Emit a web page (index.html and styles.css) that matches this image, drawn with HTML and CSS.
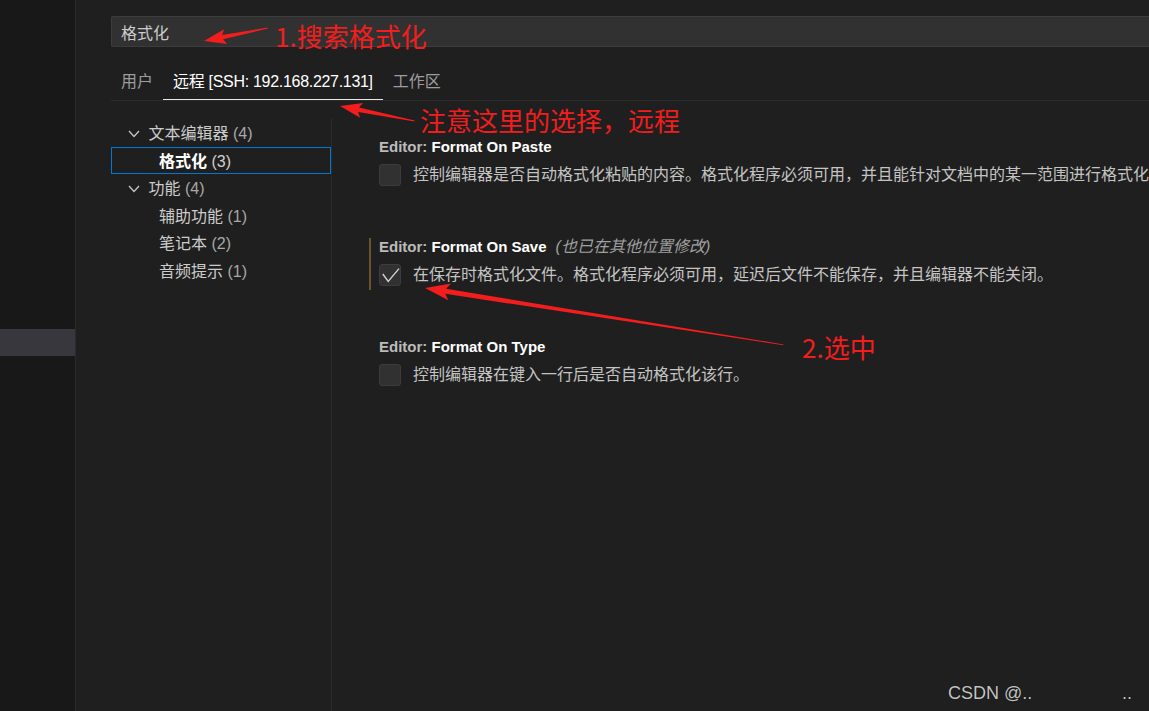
FILE: index.html
```html
<!DOCTYPE html>
<html lang="zh-CN">
<head>
    <meta charset="UTF-8">
    <meta name="viewport" content="width=device-width, initial-scale=1.0">
    <title>设置</title>
    <link rel="stylesheet" href="styles.css">
</head>
<body>
    <div class="app">
        <div class="activity">
            <div class="activity-sel"></div>
        </div>
        <div class="main">
            <div class="search">格式化</div>
            <div class="tabs">
                <div class="tab">用户</div>
                <div class="tab active">远程 [SSH: 192.168.227.131]</div>
                <div class="tab">工作区</div>
            </div>
            <div class="body">
                <div class="tree">
                    <div class="row group">
                        <svg class="chev" width="12" height="8" viewBox="0 0 12 8"><polyline points="1,1 6,6.5 11,1" fill="none" stroke="#c5c5c5" stroke-width="1.3"/></svg>
                        文本编辑器 <span class="count">(4)</span>
                    </div>
                    <div class="row child selected"><b>格式化</b> <span class="count">(3)</span></div>
                    <div class="row group">
                        <svg class="chev" width="12" height="8" viewBox="0 0 12 8"><polyline points="1,1 6,6.5 11,1" fill="none" stroke="#c5c5c5" stroke-width="1.3"/></svg>
                        功能 <span class="count">(4)</span>
                    </div>
                    <div class="row child">辅助功能 <span class="count">(1)</span></div>
                    <div class="row child">笔记本 <span class="count">(2)</span></div>
                    <div class="row child">音频提示 <span class="count">(1)</span></div>
                </div>
                <div class="settings">
                    <div class="setting">
                        <div class="title"><span class="cat">Editor: </span>Format On Paste</div>
                        <div class="value">
                            <span class="box"></span>
                            <span class="desc">控制编辑器是否自动格式化粘贴的内容。格式化程序必须可用，并且能针对文档中的某一范围进行格式化。</span>
                        </div>
                    </div>
                    <div class="setting modified">
                        <div class="title"><span class="cat">Editor: </span>Format On Save<span class="note">(也已在其他位置修改)</span></div>
                        <div class="value">
                            <span class="box">
                                <svg width="22" height="22" viewBox="0 0 22 22"><polyline points="3.8,10 9.2,17.4 20,4.6" fill="none" stroke="#d4d4d4" stroke-width="1.4"/></svg>
                            </span>
                            <span class="desc">在保存时格式化文件。格式化程序必须可用，延迟后文件不能保存，并且编辑器不能关闭。</span>
                        </div>
                    </div>
                    <div class="setting">
                        <div class="title"><span class="cat">Editor: </span>Format On Type</div>
                        <div class="value">
                            <span class="box"></span>
                            <span class="desc">控制编辑器在键入一行后是否自动格式化该行。</span>
                        </div>
                    </div>
                </div>
            </div>
        </div>

        <!-- 标注 -->
        <svg class="marks" width="1149" height="711" viewBox="0 0 1149 711">
            <g fill="#f21d1d">
                <g transform="translate(204 41) rotate(-11.5)">
                    <polygon points="0,0 22,-7.5 19,-2.2 65,-0.5 65,0.5 19,2.2 22,7.5"/>
                </g>
                <g transform="translate(340 106) rotate(11.3)">
                    <polygon points="0,0 22,-7.5 19,-2.2 76,-0.5 76,0.5 19,2.2 22,7.5"/>
                </g>
                <g transform="translate(425 288) rotate(9)">
                    <polygon points="0,0 25,-8.5 21,-2.6 363,-0.4 363,0.4 21,2.6 25,8.5"/>
                </g>
            </g>
        </svg>
        <div class="mark mark-1">1.搜索格式化</div>
        <div class="mark mark-2">注意这里的选择，远程</div>
        <div class="mark mark-3">2.选中</div>

        <div class="wm">CSDN @..</div>
        <div class="wm wm-2">..</div>
    </div>
</body>
</html>
```

FILE: styles.css
```css
* {
    box-sizing: border-box;
}
body {
    margin: 0;
    padding: 0;
    background-color: #1f1f1f;
    font-family: "Liberation Sans", "Noto Sans CJK SC", sans-serif;
    font-size: 16px;
    color: #cccccc;
}
.app {
    position: relative;
    width: 1149px;
    height: 711px;
    display: flex;
    overflow: hidden;
}
.activity {
    width: 76px;
    flex-shrink: 0;
    background-color: #181818;
    border-right: 1px solid #2b2b2b;
    padding-top: 329px;
}
.activity-sel {
    height: 27px;
    background-color: #37373d;
}
.main {
    flex: 1;
    min-width: 0;
    padding: 16px 0 0 35px;
    display: flex;
    flex-direction: column;
}
.search {
    height: 31px;
    line-height: 33px;
    padding-left: 9px;
    background-color: #313131;
    border: 1px solid #3c3c3c;
    border-right: none;
    border-radius: 2px 0 0 2px;
    color: #cccccc;
}
.tabs {
    display: flex;
    border-bottom: 1px solid #2b2b2b;
}
.tab {
    padding: 24px 10px 6px;
    line-height: 22px;
    color: #9d9d9d;
    border-bottom: 1px solid transparent;
    white-space: nowrap;
}
.tab.active {
    color: #ffffff;
    letter-spacing: -0.3px;
    border-bottom-color: #e7e7e7;
}
.body {
    flex: 1;
    display: flex;
    margin-top: 17px;
}
.tree {
    width: 221px;
    flex-shrink: 0;
    border-right: 1px solid #2b2b2b;
    padding-top: 1px;
}
.row {
    height: 27.5px;
    line-height: 27.5px;
    white-space: nowrap;
    border: 1px solid transparent;
    color: #cccccc;
}
.row.group {
    padding-left: 16px;
}
.row.child {
    padding-left: 47px;
}
.chev {
    margin-right: 4px;
    vertical-align: 1px;
}
.count {
    color: #a8a8a8;
}
.row.selected {
    border-color: #0078d4;
    color: #ffffff;
}
.row.selected b {
    font-weight: 700;
}
.row.selected .count {
    color: #d0d0d0;
}
.settings {
    flex: 1;
    min-width: 0;
    padding: 20px 0 0 37px;
}
.setting {
    height: 52px;
    margin-bottom: 48px;
    padding-left: 8px;
    border-left: 2px solid transparent;
    white-space: nowrap;
}
.setting.modified {
    border-left-color: #6b5428;
}
.title {
    height: 18px;
    line-height: 17px;
    font-size: 15px;
    font-weight: 700;
    color: #ffffff;
}
.cat {
    color: #bbbbbb;
}
.note {
    margin-left: 9px;
    font-size: 16px;
    font-weight: 400;
    font-style: italic;
    color: #a0a0a0;
}
.value {
    margin-top: 8px;
    display: flex;
    align-items: center;
}
.box {
    width: 22px;
    height: 22px;
    flex-shrink: 0;
    background-color: #313131;
    border: 1px solid #3c3c3c;
    border-radius: 3px;
    display: flex;
}
.box svg {
    margin: -1px;
}
.desc {
    margin-left: 12px;
    line-height: 22px;
    color: #c4c4c4;
}
.marks {
    position: absolute;
    left: 0;
    top: 0;
    pointer-events: none;
}
.mark {
    position: absolute;
    font-family: "Noto Sans CJK SC", sans-serif;
    font-size: 26px;
    line-height: 30px;
    color: #f21d1d;
    white-space: nowrap;
}
.mark-1 {
    left: 275px;
    top: 21px;
}
.mark-2 {
    left: 420px;
    top: 105px;
}
.mark-3 {
    left: 802px;
    top: 332px;
}
.wm {
    position: absolute;
    left: 948px;
    top: 682px;
    font-family: "Liberation Sans", sans-serif;
    font-size: 18px;
    line-height: 22px;
    color: #c4c4c4;
    text-shadow: 0 0 1px #000;
}
.wm-2 {
    left: 1122px;
}
```
